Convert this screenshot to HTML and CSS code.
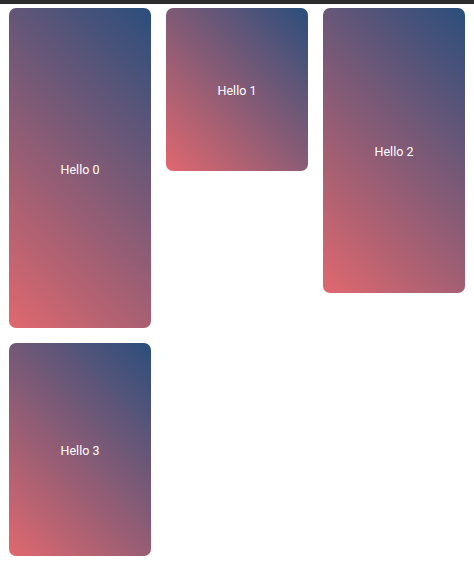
FILE: index.html
```html
<!DOCTYPE html>
<html>
<head>
<meta charset="utf-8">
<link rel="stylesheet" href="styles.css">
</head>
<body>
<div class="topbar"></div>
<div class="grid">
  <div class="card h0">Hello 0</div>
  <div class="card h1">Hello 1</div>
  <div class="card h2">Hello 2</div>
  <div class="card h3">Hello 3</div>
</div>
</body>
</html>
```
FILE: styles.css
```css
html, body {
  margin: 0;
  padding: 0;
  background: #ffffff;
  font-family: Roboto, "Liberation Sans", sans-serif;
}
.topbar {
  height: 4px;
  background: #2b2b2b;
}
.grid {
  display: grid;
  grid-template-columns: repeat(3, 142px);
  column-gap: 15px;
  row-gap: 15px;
  align-items: start;
  padding: 4px 9px 9px 9px;
}
.card {
  display: flex;
  align-items: center;
  justify-content: center;
  padding-top: 2px;
  box-sizing: border-box;
  border-radius: 7px;
  color: #ffffff;
  font-size: 12.5px;
  background: linear-gradient(45deg, #e0686f, #2b4e7c);
}
.h0 { height: 320px; }
.h1 { height: 163px; }
.h2 { height: 285px; }
.h3 { height: 213px; }
```
